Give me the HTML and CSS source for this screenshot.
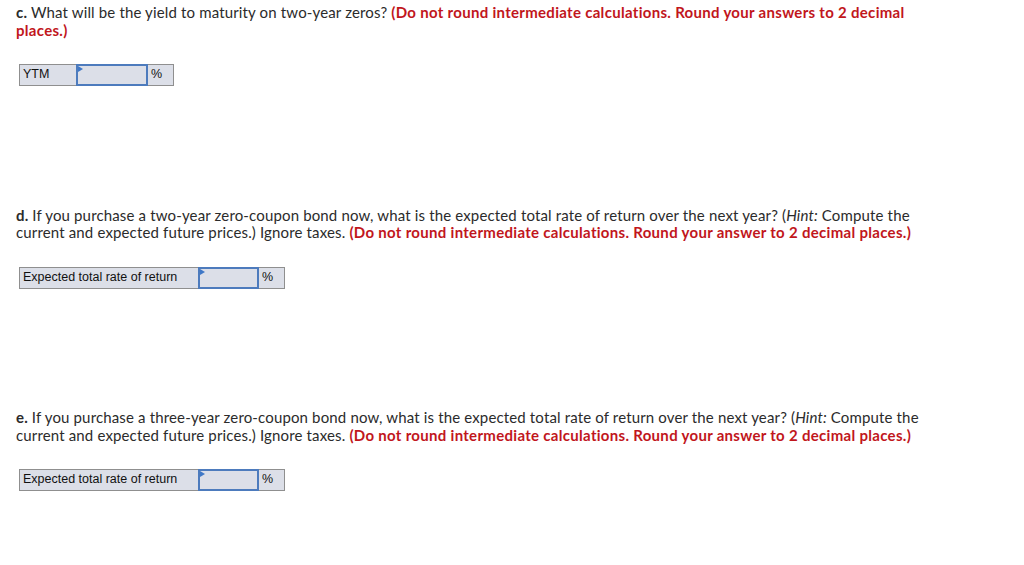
FILE: index.html
```html
<!DOCTYPE html>
<html>
<head>
<meta charset="utf-8">
<link rel="stylesheet" href="styles.css">
</head>
<body>
<div class="page">
  <section class="part part-c">
    <p class="prompt"><b>c.</b> What will be the yield to maturity on two-year zeros? <span class="note">(Do not round intermediate calculations. Round your answers to 2 decimal places.)</span></p>
    <div class="answer">
      <div class="cell label label-short">YTM</div>
      <div class="cell input input-wide"><span class="flag"></span></div>
      <div class="cell unit">%</div>
    </div>
  </section>
  <section class="part">
    <p class="prompt"><b>d.</b> If you purchase a two-year zero-coupon bond now, what is the expected total rate of return over the next year? (<i>Hint:</i> Compute the current and expected future prices.) Ignore taxes. <span class="note">(Do not round intermediate calculations. Round your answer to 2 decimal places.)</span></p>
    <div class="answer">
      <div class="cell label label-long">Expected total rate of return</div>
      <div class="cell input input-narrow"><span class="flag"></span></div>
      <div class="cell unit">%</div>
    </div>
  </section>
  <section class="part">
    <p class="prompt"><b>e.</b> If you purchase a three-year zero-coupon bond now, what is the expected total rate of return over the next year? (<i>Hint:</i> Compute the current and expected future prices.) Ignore taxes. <span class="note">(Do not round intermediate calculations. Round your answer to 2 decimal places.)</span></p>
    <div class="answer">
      <div class="cell label label-long">Expected total rate of return</div>
      <div class="cell input input-narrow"><span class="flag"></span></div>
      <div class="cell unit">%</div>
    </div>
  </section>
</div>
</body>
</html>
```

FILE: styles.css
```css
html, body {
  margin: 0;
  padding: 0;
  background: #ffffff;
}

.page {
  padding: 4px 0 0 16px;
  width: 912px;
  font-family: Lato, "Open Sans", sans-serif;
  font-size: 15px;
  line-height: 17.5px;
  letter-spacing: 0.15px;
  color: #2b2b2b;
}

.part {
  margin-bottom: 120.5px;
}

.part:last-child {
  margin-bottom: 0;
}

.prompt {
  margin: 0;
}

.prompt b {
  font-weight: 700;
}

.note {
  color: #c1161c;
  font-weight: 700;
  letter-spacing: 0.3px;
}

.answer {
  display: flex;
  margin: 25px 0 0 3px;
  height: 22px;
  font-family: "Liberation Sans", Arial, sans-serif;
  font-size: 12.5px;
  letter-spacing: 0;
  color: #111;
}

.cell {
  box-sizing: border-box;
  height: 22px;
  background: #dcdfe8;
  border: 1px solid #8f8f8f;
  display: flex;
  align-items: center;
  padding-left: 3px;
}

.label {
  border-right: none;
}

.label-short { width: 57px; }
.label-long { width: 179px; }

.input {
  position: relative;
  border: 2px solid #4d7bbd;
  background: #dcdfe8;
}

.input-wide { width: 72px; }
.input-narrow { width: 61px; }

.flag {
  position: absolute;
  left: 0;
  top: 0;
  width: 0;
  height: 0;
  border-top: 3px solid transparent;
  border-bottom: 3px solid transparent;
  border-left: 5px solid #3f78c7;
}

.unit {
  width: 26px;
  border-left: none;
}
```
